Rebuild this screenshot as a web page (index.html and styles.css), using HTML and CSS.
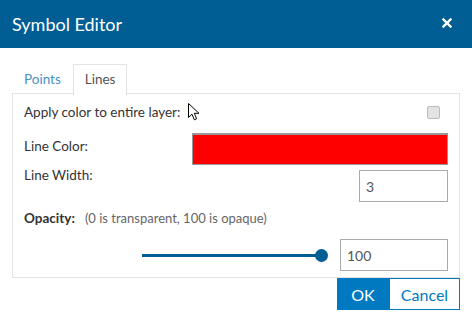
FILE: index.html
```html
<!DOCTYPE html>
<html lang="en">
<head>
    <meta charset="UTF-8">
    <meta name="viewport" content="width=device-width, initial-scale=1.0">
    <title>Symbol Editor</title>
    <link rel="stylesheet" href="styles.css">
</head>
<body>
    <div class="dialog">
        <div class="dialog-header">
            <span class="dialog-title">Symbol Editor</span>
            <svg class="dialog-close" width="10" height="10" viewBox="0 0 10 10">
                <path d="M1.5 1.5 L8.5 8.5 M8.5 1.5 L1.5 8.5" stroke="#fff" stroke-width="2.4" stroke-linecap="square"/>
            </svg>
        </div>

        <div class="dialog-body">
            <div class="tabs">
                <div class="tab">Points</div>
                <div class="tab tab-active">Lines</div>
            </div>

            <div class="panel">
                <div class="row row-apply">
                    <span class="label">Apply color to entire layer:</span>
                    <span class="checkbox"></span>
                </div>

                <div class="row row-color">
                    <span class="label label-color">Line Color:</span>
                    <div class="color-swatch"></div>
                </div>

                <div class="row row-width">
                    <span class="label">Line Width:</span>
                    <input class="field field-width" type="text" value="3">
                </div>

                <div class="row row-opacity">
                    <span class="label label-bold">Opacity:</span>
                    <span class="hint">(0 is transparent, 100 is opaque)</span>
                </div>

                <div class="row row-slider">
                    <div class="slider">
                        <div class="slider-track"></div>
                        <div class="slider-thumb"></div>
                    </div>
                    <input class="field field-opacity" type="text" value="100">
                </div>
            </div>

            <div class="buttons">
                <button class="btn btn-ok">OK</button>
                <button class="btn btn-cancel">Cancel</button>
            </div>
        </div>

        <!-- mouse pointer from the screenshot -->
        <svg class="cursor" width="12" height="18" viewBox="0 0 12 18">
            <path d="M0.5 0.5 L0.5 14.5 L4 11.2 L6.3 16.8 L8.6 15.8 L6.3 10.3 L11 10.3 Z" fill="#fff" stroke="#000" stroke-width="1"/>
        </svg>
    </div>
</body>
</html>
```

FILE: styles.css
```css
body {
    margin: 0;
    background: #fff;
    font-family: 'Lato', 'Open Sans', sans-serif;
    color: #444;
}

.dialog {
    position: relative;
    width: 472px;
    height: 321px;
}

.dialog-header {
    height: 48px;
    background: #005e95; /* dark blue bar */
    padding: 0 20px 0 12px;
    display: flex;
    align-items: center;
    justify-content: space-between;
}

.dialog-title {
    color: #fff;
    font-size: 18px;
}

.dialog-close {
    display: block;
    margin-top: -2px;
}

.dialog-body {
    padding: 16px 12px 0;
}

.tabs {
    display: flex;
    height: 30px;
    margin-bottom: -1px;
}

.tab {
    padding: 0 12px;
    line-height: 31px;
    font-size: 13.5px;
    color: #4b8fc0;
}

.tab-active {
    color: #555;
    background: #fff;
    border: 1px solid #e3e3e3;
    border-bottom: 1px solid #fff;
    padding: 0 11px;
    line-height: 29px;
    height: 30px;
    position: relative;
    z-index: 1;
}

.panel {
    border: 1px solid #e3e3e3;
    padding: 0 11px 5px;
    box-sizing: border-box;
    height: 185px;
}

.row {
    display: flex;
    justify-content: space-between;
}

.label {
    font-size: 13.5px;
    color: #333;
    line-height: 20px;
}

.label-bold {
    font-weight: 700;
}

.row-apply {
    height: 20px;
    margin-top: 8px;
    align-items: center;
}

.checkbox {
    width: 11px;
    height: 11px;
    border: 1px solid #bbb;
    border-radius: 2px;
    background: #e4e4e4;
    margin-right: 8px;
}

.row-color {
    margin-top: 11px;
    height: 32px;
    align-items: center;
}

.label-color {
    padding-bottom: 7px;
}

.color-swatch {
    width: 254px;
    height: 29px;
    background: #f00;
    border: 1px solid #999;
    border-top-width: 2px;
}

.row-width {
    height: 37px;
}

.field {
    box-sizing: border-box;
    height: 32px;
    border: 1px solid #aaa;
    font-family: 'Lato', 'Open Sans', sans-serif;
    font-size: 14px;
    color: #555;
    padding: 0 6px;
    margin: 0;
}

.field-width {
    width: 89px;
    margin-top: 5px;
}

.row-opacity {
    margin-top: 6px;
    justify-content: flex-start;
    gap: 10px;
}

.hint {
    font-size: 13px;
    color: #666;
    line-height: 20px;
}

.row-slider {
    margin-top: 11px;
    align-items: center;
    justify-content: flex-end;
}

.slider {
    position: relative;
    width: 186px;
    height: 14px;
    margin-right: 12px;
}

.slider-track {
    position: absolute;
    left: 0;
    right: 6px;
    top: 6px;
    height: 3px;
    background: #005e95;
}

.slider-thumb {
    position: absolute;
    right: 0;
    top: 1px;
    width: 13px;
    height: 13px;
    border-radius: 50%;
    background: #005e95;
}

.field-opacity {
    width: 108px;
}

.buttons {
    display: flex;
    justify-content: flex-end;
}

.btn {
    height: 32px;
    font-family: 'Lato', 'Open Sans', sans-serif;
    font-size: 16px;
    border: 1px solid #0079c1;
    margin: 0;
    cursor: pointer;
}

.btn-ok {
    width: 52px;
    background: #0079c1;
    color: #fff;
}

.btn-cancel {
    width: 71px;
    background: #fff;
    color: #0079c1;
}

.cursor {
    position: absolute;
    left: 188px;
    top: 103px;
}
```
